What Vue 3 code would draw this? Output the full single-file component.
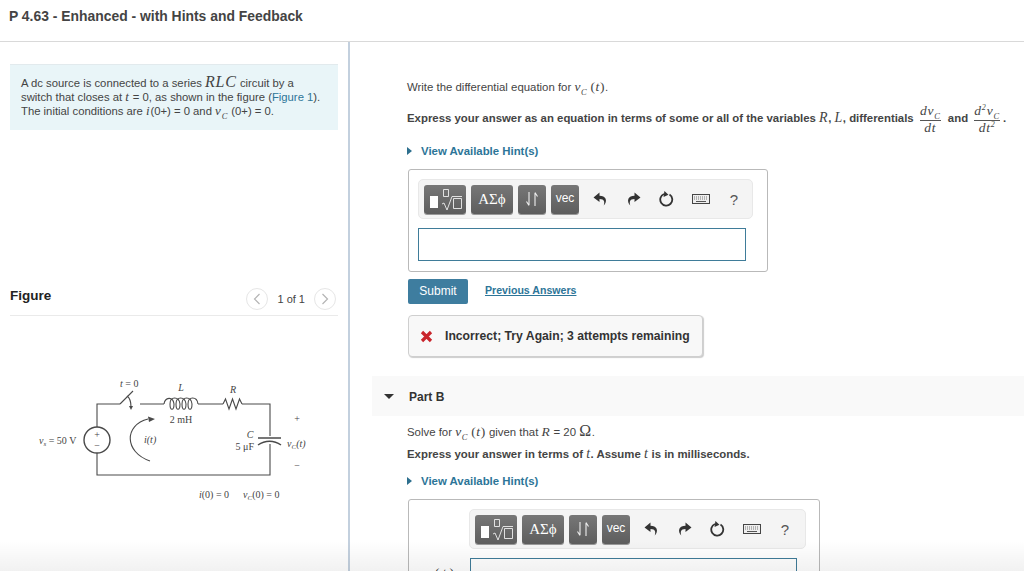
<script setup>
const toolIcons = ['undo', 'redo', 'reset', 'keys', 'help']
</script>

<template>
  <div class="page">
    <header class="top">
      <h1>P 4.63 - Enhanced - with Hints and Feedback</h1>
    </header>

    <div class="cols">
      <aside class="left">
        <div class="intro">
          A dc source is connected to a series <i class="m big">RLC</i> circuit by a<br />
          switch that closes at <i class="m mi">t</i> = 0, as shown in the figure (<a>Figure 1</a>).<br />
          The initial conditions are <i class="m mi">i</i>(0+) = 0 and <i class="m mi">v<sub>C</sub></i> (0+) = 0.
        </div>

        <div class="fig-head">
          <strong>Figure</strong>
          <div class="pager">
            <span class="circle"><svg width="8" height="12" viewBox="0 0 8 12"><path d="M6.500 1 1.500 6l5 5" fill="none" stroke="#b4b4b4" stroke-width="1.200" /></svg></span>
            <span class="count">1 of 1</span>
            <span class="circle"><svg width="8" height="12" viewBox="0 0 8 12"><path d="M1.500 1l5 5-5 5" fill="none" stroke="#b4b4b4" stroke-width="1.200" /></svg></span>
          </div>
        </div>

        <svg class="circuit" width="340" height="135" viewBox="0 370 340 135">
          <g fill="none" stroke="#4a4a4a" stroke-width="1.100">
            <path d="M97 426V403H120M140 403H164M198 403H223M242 403H270V435M270 443V474H97V452" />
            <circle cx="97" cy="439" r="13" stroke-width="1.400" />
            <path d="M120 403 133 390" />
            <path d="M127 395c3 2 4 6 4 11" />
            <path d="M164 403c1-7 9-8 10 0c0 7-4 7-4 0c0-8 9-8 10 0c0 7-4 7-4 0c0-8 9-8 10 0c0 7-4 7-4 0c0-8 9-8 10 0c0 7-4 7-4 0c0-8 9-8 10 0" />
            <path d="M223 403l2.500-5 3.500 10 3.500-10 3.500 10 3.500-10 2.500 5" />
            <path d="M258 437H281" stroke-width="1.500" />
            <path d="M258 444c7-5 16-5 23 0" stroke-width="1.500" />
            <path d="M150 460c-26-9-26-36 -2-42" />
          </g>
          <path d="M148 415.500l7 2.500-6 3z" fill="#4a4a4a" />
          <path d="M129 405h4l-2 4z" fill="#4a4a4a" />
          <g class="serif">
            <text x="39" y="443" font-style="italic">v<tspan font-size="7" dy="2">s</tspan><tspan dy="-2" font-style="normal"> = 50 V</tspan></text>
            <text x="120" y="386" font-style="italic">t<tspan font-style="normal"> = 0</tspan></text>
            <text x="181" y="390" font-style="italic" text-anchor="middle">L</text>
            <text x="233" y="392" font-style="italic" text-anchor="middle">R</text>
            <text x="181" y="422" text-anchor="middle">2 mH</text>
            <text x="144" y="442" font-style="italic">i(t)</text>
            <text x="250" y="437" font-style="italic" text-anchor="middle">C</text>
            <text x="254" y="449" text-anchor="end">5 μF</text>
            <text x="287" y="446" font-style="italic">v<tspan font-size="7" dy="2">C</tspan><tspan dy="-2">(t)</tspan></text>
            <text x="297" y="421" text-anchor="middle">+</text>
            <text x="297" y="468" text-anchor="middle">−</text>
            <text x="97" y="437" text-anchor="middle">+</text>
            <text x="97" y="448" text-anchor="middle">−</text>
            <text x="199" y="497" font-style="italic">i<tspan font-style="normal">(0) = 0</tspan></text>
            <text x="243" y="497" font-style="italic">v<tspan font-size="7" dy="2">C</tspan><tspan dy="-2" font-style="normal">(0) = 0</tspan></text>
          </g>
        </svg>
      </aside>

      <main class="right">
        <section class="part-a">
          <p class="q">Write the differential equation for <i class="m mq">v<sub>C</sub></i> <span class="m mq">(<i>t</i>)</span>.</p>
          <p class="ask">
            Express your answer as an equation in terms of some or all of the variables <i class="m nb">R</i>, <i class="m nb">L</i>, differentials
            <span class="frac"><i>dv<sub>C</sub></i><i class="under">dt</i></span>
            and
            <span class="frac last"><i>d<sup>2</sup>v<sub>C</sub></i><i class="under">dt<sup>2</sup></i></span> .
          </p>
          <p class="hint"><span class="tri"></span><a>View Available Hint(s)</a></p>

          <div class="answer">
            <div class="toolbar">
              <span class="tbtn t1">
                <svg width="42" height="29" viewBox="0 0 42 29"><rect x="6" y="11" width="8" height="12" fill="#fff" /><g fill="none" stroke="#eee" stroke-width=".9"><path d="M19.500 4.500h5v7h-5zM29.500 13.500h8v10h-8zM18 19l2-1 3 7 5-13.500h10" /></g></svg>
              </span>
              <span class="tbtn t2">ΑΣϕ</span>
              <span class="tbtn t3">
                <svg width="14" height="16" viewBox="0 0 14 16"><path d="M4 1v13M4 14.500 1.500 10.500M10 15V2M10 1.500l2.500 4" fill="none" stroke="#eee" stroke-width="1.100" /></svg>
              </span>
              <span class="tbtn t4">vec</span>
              <div class="tools">
                <span v-for="t in toolIcons" :key="t" class="tool">
                  <svg v-if="t === 'undo'" width="14" height="14" viewBox="0 0 14 14"><path d="M6.500 .5 .5 5.500l6 4.500V7c2.500 0 4 .7 4.500 2.200.4 1.500.2 3-.3 4.300 2-1.800 2.800-4.300 1.900-6.700C11.700 4.700 9.500 3.800 6.500 3.800z" fill="#333" /></svg>
                  <svg v-else-if="t === 'redo'" width="14" height="14" viewBox="0 0 14 14"><path d="M7.500 .5l6 5-6 4.500V7C5 7 3.500 7.700 3 9.200c-.4 1.500-.2 3 .3 4.300C1.300 11.700.5 9.200 1.400 6.800 2.300 4.700 4.500 3.800 7.500 3.800z" fill="#333" /></svg>
                  <svg v-else-if="t === 'reset'" width="16" height="16" viewBox="0 0 16 16"><path d="M10.500 3.500A6 6 0 1 1 5 3" fill="none" stroke="#333" stroke-width="1.800" /><path d="M5 0 9.500 3 5 6z" fill="#333" transform="rotate(8 5 3)" /></svg>
                  <svg v-else-if="t === 'keys'" width="18" height="10" viewBox="0 0 18 10"><rect x=".5" y=".5" width="17" height="9" fill="#eee" stroke="#444" /><path d="M2 3h14M2 5h14" stroke="#777" stroke-dasharray="1 1" /><path d="M4 7.500h10" stroke="#555" /></svg>
                  <span v-else class="qm">?</span>
                </span>
              </div>
            </div>
            <div class="box"></div>
          </div>

          <div class="actions">
            <span class="submit">Submit</span>
            <a class="prev">Previous Answers</a>
          </div>

          <div class="feedback">
            <svg width="13" height="13" viewBox="0 0 13 13"><path d="M2 2l9 9M11 2l-9 9" stroke="#c9252c" stroke-width="3.200" /></svg>
            <span>Incorrect; Try Again; 3 attempts remaining</span>
          </div>
        </section>

        <div class="part-bar">
          <span class="down"></span>
          <strong>Part B</strong>
        </div>

        <section class="part-b">
          <p class="q">Solve for <i class="m mq">v<sub>C</sub></i> <span class="m mq">(<i>t</i>)</span> given that <i class="m mq">R</i> = 20 <span class="m mq omega">Ω</span>.</p>
          <p class="ask b2">Express your answer in terms of <i class="m nb">t</i>. Assume <i class="m nb">t</i> is in milliseconds.</p>
          <p class="hint h2"><span class="tri"></span><a>View Available Hint(s)</a></p>

          <div class="answer answer-b">
            <div class="toolbar">
              <span class="tbtn t1">
                <svg width="42" height="29" viewBox="0 0 42 29"><rect x="6" y="11" width="8" height="12" fill="#fff" /><g fill="none" stroke="#eee" stroke-width=".9"><path d="M19.500 4.500h5v7h-5zM29.500 13.500h8v10h-8zM18 19l2-1 3 7 5-13.500h10" /></g></svg>
              </span>
              <span class="tbtn t2">ΑΣϕ</span>
              <span class="tbtn t3">
                <svg width="14" height="16" viewBox="0 0 14 16"><path d="M4 1v13M4 14.500 1.500 10.500M10 15V2M10 1.500l2.500 4" fill="none" stroke="#eee" stroke-width="1.100" /></svg>
              </span>
              <span class="tbtn t4">vec</span>
              <div class="tools">
                <span v-for="t in toolIcons" :key="t" class="tool">
                  <svg v-if="t === 'undo'" width="14" height="14" viewBox="0 0 14 14"><path d="M6.500 .5 .5 5.500l6 4.500V7c2.500 0 4 .7 4.500 2.200.4 1.500.2 3-.3 4.300 2-1.800 2.800-4.300 1.900-6.700C11.700 4.700 9.500 3.800 6.500 3.800z" fill="#333" /></svg>
                  <svg v-else-if="t === 'redo'" width="14" height="14" viewBox="0 0 14 14"><path d="M7.500 .5l6 5-6 4.500V7C5 7 3.500 7.700 3 9.200c-.4 1.500-.2 3 .3 4.300C1.300 11.700.5 9.200 1.400 6.800 2.300 4.700 4.500 3.800 7.500 3.800z" fill="#333" /></svg>
                  <svg v-else-if="t === 'reset'" width="16" height="16" viewBox="0 0 16 16"><path d="M10.500 3.500A6 6 0 1 1 5 3" fill="none" stroke="#333" stroke-width="1.800" /><path d="M5 0 9.500 3 5 6z" fill="#333" transform="rotate(8 5 3)" /></svg>
                  <svg v-else-if="t === 'keys'" width="18" height="10" viewBox="0 0 18 10"><rect x=".5" y=".5" width="17" height="9" fill="#eee" stroke="#444" /><path d="M2 3h14M2 5h14" stroke="#777" stroke-dasharray="1 1" /><path d="M4 7.500h10" stroke="#555" /></svg>
                  <span v-else class="qm">?</span>
                </span>
              </div>
            </div>
            <div class="box-row">
              <span class="lbl m">( <i>t</i> )</span>
              <div class="box"></div>
            </div>
          </div>
        </section>
      </main>
    </div>
    <div class="fade"></div>
  </div>
</template>

<style>
html, body { margin: 0; overflow: hidden; background: #fff; }
</style>

<style scoped>
.page {
  position: relative;
  width: 1024px;
  height: 571px;
  overflow: hidden;
  font-family: "Liberation Sans", Arial, sans-serif;
  font-size: 11px;
  color: #333;
}
.top {
  height: 41px;
  border-bottom: 1px solid #d9d9d9;
}
h1 {
  margin: 0;
  padding: 8px 0 0 9px;
  font-size: 13.900px;
  line-height: 17px;
  color: #444;
}
.cols { display: flex; height: 529px; }
.left {
  width: 350px;
  flex: none;
  box-sizing: border-box;
  padding: 22px 10px 0 10px;
  border-right: 2px solid #c3d0de;
}
.intro {
  height: 66px;
  box-sizing: border-box;
  padding: 11px 11px;
  background: #e9f5f8;
  border-top: 1px solid #e2eaed;
  line-height: 14px;
  font-size: 11.300px;
  color: #444;
  white-space: nowrap;
}
.intro a, .hint a, .prev { color: #2d7598; }
.m { font-family: "Liberation Serif", serif; }
.mi { font-size: 13px; letter-spacing: .8px; }
.big { font-size: 16px; letter-spacing: .8px; line-height: 10px; }
sub { font-size: 8.500px; line-height: 0; }
sup { font-size: 8px; line-height: 0; }
.fig-head {
  margin-top: 155px;
  height: 31px;
  display: flex;
  align-items: center;
  justify-content: space-between;
  border-bottom: 1px solid #eaeaea;
  box-sizing: border-box;
}
.fig-head strong { font-size: 13.500px; color: #222; margin-bottom: 9px; }
.pager { display: flex; align-items: center; gap: 9px; margin: 0 2px 2px 0; }
.circle {
  width: 22px;
  height: 22px;
  box-sizing: border-box;
  border: 1px solid #e6e6e6;
  border-radius: 50%;
  display: flex;
  align-items: center;
  justify-content: center;
}
.count { font-size: 11px; color: #444; }
.circuit { display: block; margin: 55px 0 0 -10px; }
.serif text { font-family: "Liberation Serif", serif; font-size: 10px; fill: #444; }
.right { flex: 1; min-width: 0; }
.part-a { padding: 38px 0 0 57px; }
.q { margin: 0; font-size: 11.400px; line-height: 14px; color: #444; }
.mq { font-size: 13.500px; letter-spacing: .6px; }
.omega { font-size: 16px; line-height: 10px; }
.ask {
  margin: 10px 0 0;
  font-size: 11.400px;
  font-weight: bold;
  line-height: 24px;
  color: #444;
  white-space: nowrap;
}
.nb { font-weight: normal; font-size: 14px; letter-spacing: .5px; }
.frac {
  display: inline-flex;
  flex-direction: column;
  vertical-align: middle;
  text-align: center;
  font-family: "Liberation Serif", serif;
  font-weight: normal;
  font-size: 13.500px;
  letter-spacing: .8px;
  line-height: 13px;
  margin: 0 4px 0 3px;
}
.frac i:first-child { padding-bottom: 3px; }
.frac .under { border-top: 1px solid #555; }
.frac.last { margin-right: 0; }
.hint {
  margin: 10px 0 0;
  font-size: 11.400px;
  font-weight: bold;
  line-height: 14px;
  display: flex;
  align-items: center;
}
.tri {
  width: 0;
  height: 0;
  border-left: 5px solid #2d6f8e;
  border-top: 4px solid transparent;
  border-bottom: 4px solid transparent;
  margin-right: 9px;
}
.answer {
  margin: 11px 0 0 1px;
  width: 360px;
  height: 103px;
  box-sizing: border-box;
  border: 1px solid #b9b9b9;
  border-radius: 3px;
  padding: 9px;
}
.toolbar {
  width: 335px;
  height: 40px;
  box-sizing: border-box;
  background: #f4f4f4;
  border: 1px solid #e8e8e8;
  border-radius: 5px;
  display: flex;
  align-items: center;
  padding: 0 5px;
  gap: 5px;
}
.tbtn {
  height: 29px;
  box-sizing: border-box;
  border-radius: 3px;
  background: linear-gradient(#777, #5d5d5d);
  box-shadow: 0 1px 0 #999;
  color: #fff;
  display: flex;
  align-items: center;
  justify-content: center;
}
.t1 { width: 42px; }
.t2 { width: 42px; font-family: "Liberation Serif", serif; font-size: 15px; }
.t3 { width: 28px; }
.t4 { width: 28px; font-size: 12px; padding-bottom: 2px; }
.tools { display: flex; flex: 1; justify-content: space-between; padding: 0 3px 0 6px; align-items: center; }
.tool { width: 20px; display: flex; justify-content: center; align-items: center; }
.qm { font-size: 15px; color: #555; }
.box {
  margin-top: 9px;
  width: 328px;
  height: 33px;
  box-sizing: border-box;
  border: 1px solid #3f7c99;
}
.actions {
  margin: 7px 0 0 1px;
  height: 25px;
  display: flex;
  align-items: flex-start;
}
.submit {
  width: 60px;
  height: 25px;
  box-sizing: border-box;
  border-radius: 2px;
  background: #3e7d9f;
  color: #fff;
  font-size: 12px;
  line-height: 25px;
  text-align: center;
}
.prev {
  margin: 4px 0 0 17px;
  font-size: 10.600px;
  font-weight: bold;
  text-decoration: underline;
  line-height: 14px;
}
.feedback {
  margin: 11px 0 0 1px;
  width: 295px;
  height: 42px;
  box-sizing: border-box;
  border: 1px solid #cfcfcf;
  border-radius: 4px;
  background: #f8f8f8;
  box-shadow: 1px 1px 1px #ccc;
  display: flex;
  align-items: center;
  padding-left: 11px;
  gap: 12px;
  font-size: 12.200px;
  font-weight: bold;
  color: #333;
}
.part-bar {
  margin: 19px 0 0 22px;
  height: 40px;
  background: #f9f9f9;
  display: flex;
  align-items: center;
  padding: 1px 0 0 12px;
  box-sizing: border-box;
  gap: 15px;
}
.part-bar strong { font-size: 12px; color: #333; }
.down {
  width: 0;
  height: 0;
  border-top: 5px solid #333;
  border-left: 5px solid transparent;
  border-right: 5px solid transparent;
}
.part-b { padding: 9px 0 0 57px; }
.b2 { margin-top: 3px; }
.h2 { margin-top: 8px; }
.answer-b {
  width: 412px;
  margin-top: 11px;
  height: 120px;
  padding: 9px 10px 0 60px;
}
.answer-b .toolbar { width: 337px; }
.answer-b .tools { padding: 0 5px 0 6px; }
.box-row { display: flex; margin-left: -34px; }
.answer-b .box { width: 327px; margin-left: 12px; }
.lbl { width: 23px; margin-top: 17px; font-size: 13px; line-height: 14px; white-space: nowrap; }
.fade {
  position: absolute;
  left: 0;
  right: 0;
  bottom: 0;
  height: 30px;
  background: linear-gradient(rgba(0, 0, 0, 0), rgba(0, 0, 0, .055));
  pointer-events: none;
}
</style>
